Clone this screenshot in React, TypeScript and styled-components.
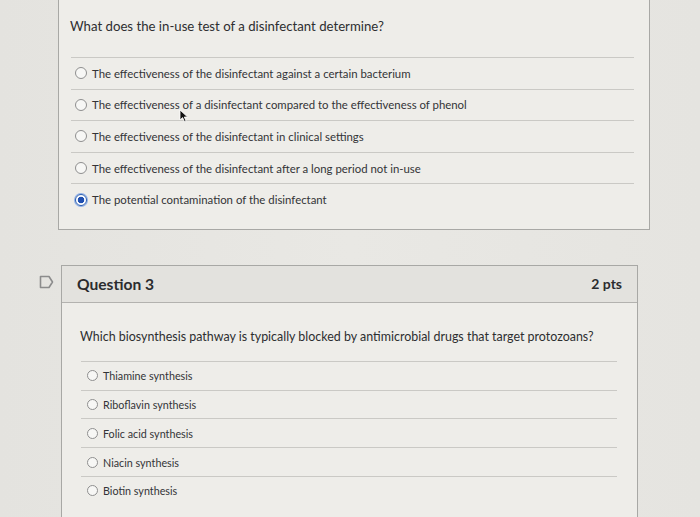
import React from "react";
import styled, { createGlobalStyle } from "styled-components";

const Global = createGlobalStyle`
  html, body { margin: 0; padding: 0; }
  body {
    background: #e6e5e1;
    font-family: Lato, "Open Sans", "Liberation Sans", sans-serif;
    color: #2f3033;
    overflow: hidden;
  }
`;

const Page = styled.div`
  position: relative;
  width: 700px;
  height: 517px;
  overflow: hidden;
  display: flex;
  flex-direction: column;
  gap: 35px;
  background: linear-gradient(90deg, #e4e3df 0%, #e9e8e4 50%, #e5e4e0 100%);
`;

const Row = styled.div<{ $left: number }>`
  display: flex;
  align-items: flex-start;
  flex: none;
  padding-left: ${(p) => p.$left - 58}px;
`;

const FlagSlot = styled.div`
  width: 58px;
  flex: none;
  display: flex;
  justify-content: flex-start;
  padding-left: 36px;
  box-sizing: border-box;
  padding-top: 10px;
`;

const Card = styled.section<{ $width: number; $open?: boolean }>`
  width: ${(p) => p.$width}px;
  background: #eeede9;
  border: 1px solid #a8a8a5;
  border-top: ${(p) => (p.$open ? "none" : "1px solid #a8a8a5")};
  box-sizing: border-box;
`;

const Header = styled.header`
  height: 37px;
  display: flex;
  align-items: center;
  justify-content: space-between;
  padding: 0 15px 0 15px;
  background: #e3e2de;
  border-bottom: 1px solid #b3b2af;
  box-sizing: border-box;
`;

const Title = styled.h2`
  margin: 0;
  font-size: 15.6px;
  font-weight: 700;
  color: #2b2c2e;
`;

const Points = styled.span`
  font-size: 14px;
  font-weight: 700;
  color: #2b2c2e;
`;

const Body = styled.div<{ $pad: string }>`
  padding: ${(p) => p.$pad};
`;

const Prompt = styled.p<{ $size: number; $gap: number }>`
  margin: 0 0 ${(p) => p.$gap}px 0;
  font-size: ${(p) => p.$size}px;
  line-height: 20px;
  color: #2d2e30;
`;

const Answers = styled.ul`
  list-style: none;
  margin: 0 0 0 1px;
  padding: 0;
  border-top: 1px solid #cac9c5;
`;

const Answer = styled.li<{ $h: number; $size: number; $last?: boolean; $indent: number }>`
  height: ${(p) => p.$h}px;
  display: flex;
  align-items: center;
  gap: 5px;
  padding-left: ${(p) => p.$indent}px;
  font-size: ${(p) => p.$size}px;
  color: #333437;
  border-bottom: ${(p) => (p.$last ? "none" : "1px solid #cac9c5")};
`;

const Radio = styled.span<{ $checked?: boolean; $d: number }>`
  width: ${(p) => p.$d}px;
  height: ${(p) => p.$d}px;
  flex: none;
  border-radius: 50%;
  box-sizing: border-box;
  border: 1px solid ${(p) => (p.$checked ? "#2a5db0" : "#8f8f8f")};
  background: ${(p) =>
    p.$checked
      ? "radial-gradient(circle, #1f4fb0 0 3px, #ffffff 3.6px)"
      : "#f7f7f5"};
  box-shadow: ${(p) => (p.$checked ? "0 0 0 1px #8fb0e8" : "none")};
`;

const Cursor = styled.svg`
  position: absolute;
  left: 179px;
  top: 109px;
`;

const Flag = () => (
  <svg width="15" height="14" viewBox="0 0 15 14">
    <path
      d="M1.5 1.5 H10 L13.5 7 L10 12.5 H1.5 Z"
      fill="none"
      stroke="#8c8c8c"
      strokeWidth="1.6"
      strokeLinejoin="round"
    />
  </svg>
);

const q1 = [
  "The effectiveness of the disinfectant against a certain bacterium",
  "The effectiveness of a disinfectant compared to the effectiveness of phenol",
  "The effectiveness of the disinfectant in clinical settings",
  "The effectiveness of the disinfectant after a long period not in-use",
  "The potential contamination of the disinfectant",
];

const q2 = [
  "Thiamine synthesis",
  "Riboflavin synthesis",
  "Folic acid synthesis",
  "Niacin synthesis",
  "Biotin synthesis",
];

export default function App() {
  return (
    <>
      <Global />
      <Page>
        <Row $left={58}>
          <FlagSlot />
          <Card $width={592} $open>
            <Body $pad="16px 15px 14px 11px">
              <Prompt $size={13.2} $gap={21}>
                What does the in-use test of a disinfectant determine?
              </Prompt>
              <Answers>
                {q1.map((t, i) => (
                  <Answer
                    key={t}
                    $h={30.6}
                    $size={11.4}
                    $indent={4}
                    $last={i === q1.length - 1}
                  >
                    <Radio $d={12} $checked={i === 4} />
                    {t}
                  </Answer>
                ))}
              </Answers>
            </Body>
          </Card>
        </Row>
        <Row $left={61}>
          <FlagSlot>
            <Flag />
          </FlagSlot>
          <Card $width={577}>
            <Header>
              <Title>Question 3</Title>
              <Points>2 pts</Points>
            </Header>
            <Body $pad="24px 20px 40px 18px">
              <Prompt $size={12.45} $gap={14}>
                Which biosynthesis pathway is typically blocked by antimicrobial
                drugs that target protozoans?
              </Prompt>
              <Answers>
                {q2.map((t, i) => (
                  <Answer
                    key={t}
                    $h={27.75}
                    $size={10.75}
                    $indent={6}
                    $last={i === q2.length - 1}
                  >
                    <Radio $d={11} />
                    {t}
                  </Answer>
                ))}
              </Answers>
            </Body>
          </Card>
        </Row>
        <Cursor width="10" height="14" viewBox="0 0 10 14">
          <path
            d="M1 1 L1 11 L3.6 8.6 L5.4 12.6 L7 11.9 L5.3 8 L8.6 8 Z"
            fill="#111"
            stroke="#fff"
            strokeWidth="0.8"
          />
        </Cursor>
      </Page>
    </>
  );
}
